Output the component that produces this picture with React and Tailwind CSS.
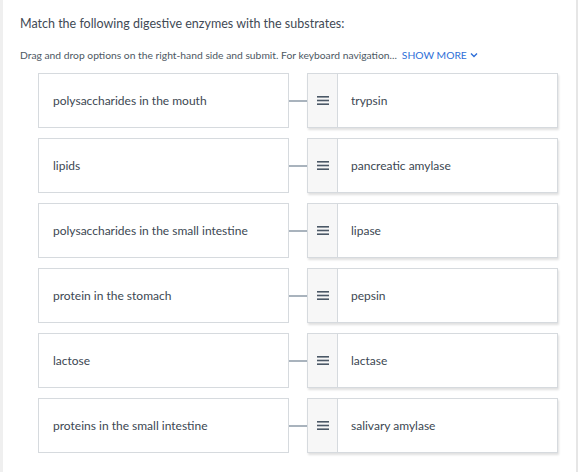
import React from "react";

const rows = [
  ["polysaccharides in the mouth", "trypsin"],
  ["lipids", "pancreatic amylase"],
  ["polysaccharides in the small intestine", "lipase"],
  ["protein in the stomach", "pepsin"],
  ["lactose", "lactase"],
  ["proteins in the small intestine", "salivary amylase"],
];

function Handle() {
  return (
    <svg width="12" height="9" viewBox="0 0 12 9" className="block">
      <rect x="0" y="0" width="12" height="1.6" fill="#4b5866" />
      <rect x="0" y="3.7" width="12" height="1.6" fill="#4b5866" />
      <rect x="0" y="7.4" width="12" height="1.6" fill="#4b5866" />
    </svg>
  );
}

export default function App() {
  return (
    <div
      className="w-[578px] h-[472px] bg-white flex overflow-hidden"
      style={{ fontFamily: "Lato, 'Open Sans', sans-serif" }}
    >
      <div className="w-[3px] bg-[#efefef] shrink-0" />
      <div className="flex-1 flex flex-col">
        <div className="pl-[17px] pt-[16px] text-[12.5px] leading-[16px] text-[#3f4a55]">
          Match the following digestive enzymes with the substrates:
        </div>
        <div className="pl-[17px] mt-[16px] text-[10.3px] leading-[14px] text-[#4d5863] flex items-center">
          <span>Drag and drop options on the right-hand side and submit. For keyboard navigation...</span>
          <span className="ml-[5px] text-[#2e6fd8] flex items-center">
            SHOW MORE
            <svg width="8" height="6" viewBox="0 0 8 6" className="ml-[3px]">
              <path d="M1 1.5 L4 4.5 L7 1.5" stroke="#2e6fd8" strokeWidth="1.4" fill="none" />
            </svg>
          </span>
        </div>
        <div className="mt-[11px] pl-[35px] flex flex-col gap-[10px]">
          {rows.map(([l, r], i) => (
            <div key={i} className="flex items-center h-[55px]">
              <div className="w-[251px] h-[55px] border border-[#d6dade] flex items-center pl-[14px] text-[12px] text-[#3c4752]">
                {l}
              </div>
              <div className="w-[18px] h-[2px] bg-[#a9b3bd]" />
              <div className="w-[251px] h-[55px] border border-[#d6dade] flex shadow-[1px_2px_2px_rgba(0,0,0,0.12)]">
                <div className="w-[30px] bg-[#f7f7f7] border-r border-[#d6dade] flex items-center justify-center">
                  <Handle />
                </div>
                <div className="flex-1 flex items-center pl-[13px] text-[12px] text-[#3c4752]">
                  {r}
                </div>
              </div>
            </div>
          ))}
        </div>
      </div>
      <div className="w-[2px] bg-[#e6e6e6] shrink-0" />
    </div>
  );
}
